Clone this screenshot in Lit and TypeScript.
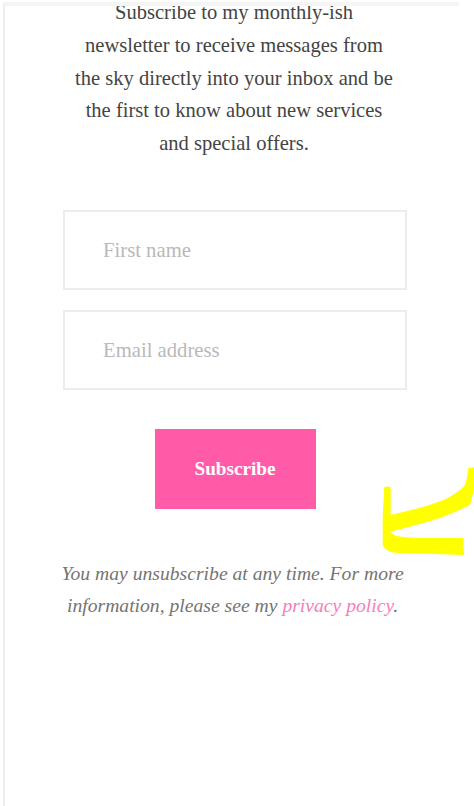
import { LitElement, html, css } from "lit";
import { customElement } from "lit/decorators.js";

@customElement("app-root")
export class AppRoot extends LitElement {
  static styles = css`
    :host {
      display: block;
      position: relative;
      height: 806px;
      overflow: hidden;
      background: #fff;
      font-family: "Liberation Serif", "Times New Roman", serif;
      box-sizing: border-box;
      padding-top: 2px;
    }
    .frame {
      width: 456px;
      height: 804px;
      margin-left: 3px;
      box-sizing: border-box;
      border-top: 4px solid #f5f5f5;
      border-left: 2px solid #eeeeee;
      overflow: hidden;
    }
    .col {
      width: 344px;
      margin: -10px 0 0 58px;
      display: flex;
      flex-direction: column;
      align-items: center;
    }
    .intro {
      margin: 0 2px 0 0;
      width: 325px;
      font-size: 20.55px;
      line-height: 32.8px;
      color: #444;
      text-align: center;
    }
    form {
      align-self: stretch;
      display: flex;
      flex-direction: column;
      align-items: center;
      gap: 20px;
      margin-top: 50px;
    }
    input {
      align-self: stretch;
      box-sizing: border-box;
      height: 80px;
      margin: 0;
      padding: 1px 38px 0;
      border: 2px solid #ececec;
      border-radius: 0;
      background: #fff;
      font: 20.7px "Liberation Serif", "Times New Roman", serif;
      color: #444;
      outline: none;
    }
    input::placeholder {
      color: #b9b9b9;
      opacity: 1;
    }
    button {
      width: 161px;
      height: 80px;
      margin: 19px 0 0;
      border: 0;
      padding: 0;
      background: #ff5ba8;
      color: #fff;
      font: bold 19.2px "Liberation Serif", "Times New Roman", serif;
    }
    .note {
      margin: 48.5px -1px 0 -6px;
      font-size: 19.65px;
      font-style: italic;
      line-height: 32px;
      color: #767472;
      text-align: center;
    }
    .note a {
      color: #f67dbb;
      text-decoration: none;
    }
    .arrow {
      position: absolute;
      left: 0;
      top: 0;
      width: 474px;
      height: 806px;
      pointer-events: none;
    }
  `;

  render() {
    return html`
      <div class="frame">
        <div class="col">
          <p class="intro">
            Subscribe to my monthly-ish newsletter to receive messages from the
            sky directly into your inbox and be the first to know about new
            services and special offers.
          </p>
          <form @submit=${(e: Event) => e.preventDefault()}>
            <input type="text" placeholder="First name" />
            <input type="email" placeholder="Email address" />
            <button type="submit">Subscribe</button>
          </form>
          <p class="note">
            You may unsubscribe at any time. For more information, please see
            my <a href="#">privacy policy</a>.
          </p>
        </div>
      </div>
      <svg class="arrow" viewBox="0 0 474 806" aria-hidden="true">
        <path
          fill="#ffff00"
          d="M384.3 486.7 L390.7 486.7 L390.7 515 C402 512 413 510 423.3 506.7 C435 503 443 501 450 496.7 C459 491 464 488 465.5 483.3 C467.5 478 467.5 473 468.3 468.3 L474 467.3 L474 490 L470 505 C460 510 450 514 440 518 C425 523 405 528 390 531.7 C393 534 395 535.5 396.7 536 C405 537.5 415 538 423 538 L463.3 538 L464 555 L406.7 553 C400 553 395 553 390 551.7 C386 550 384 548 382.7 545 L382.7 516.7 Z"
        />
      </svg>
    `;
  }
}
